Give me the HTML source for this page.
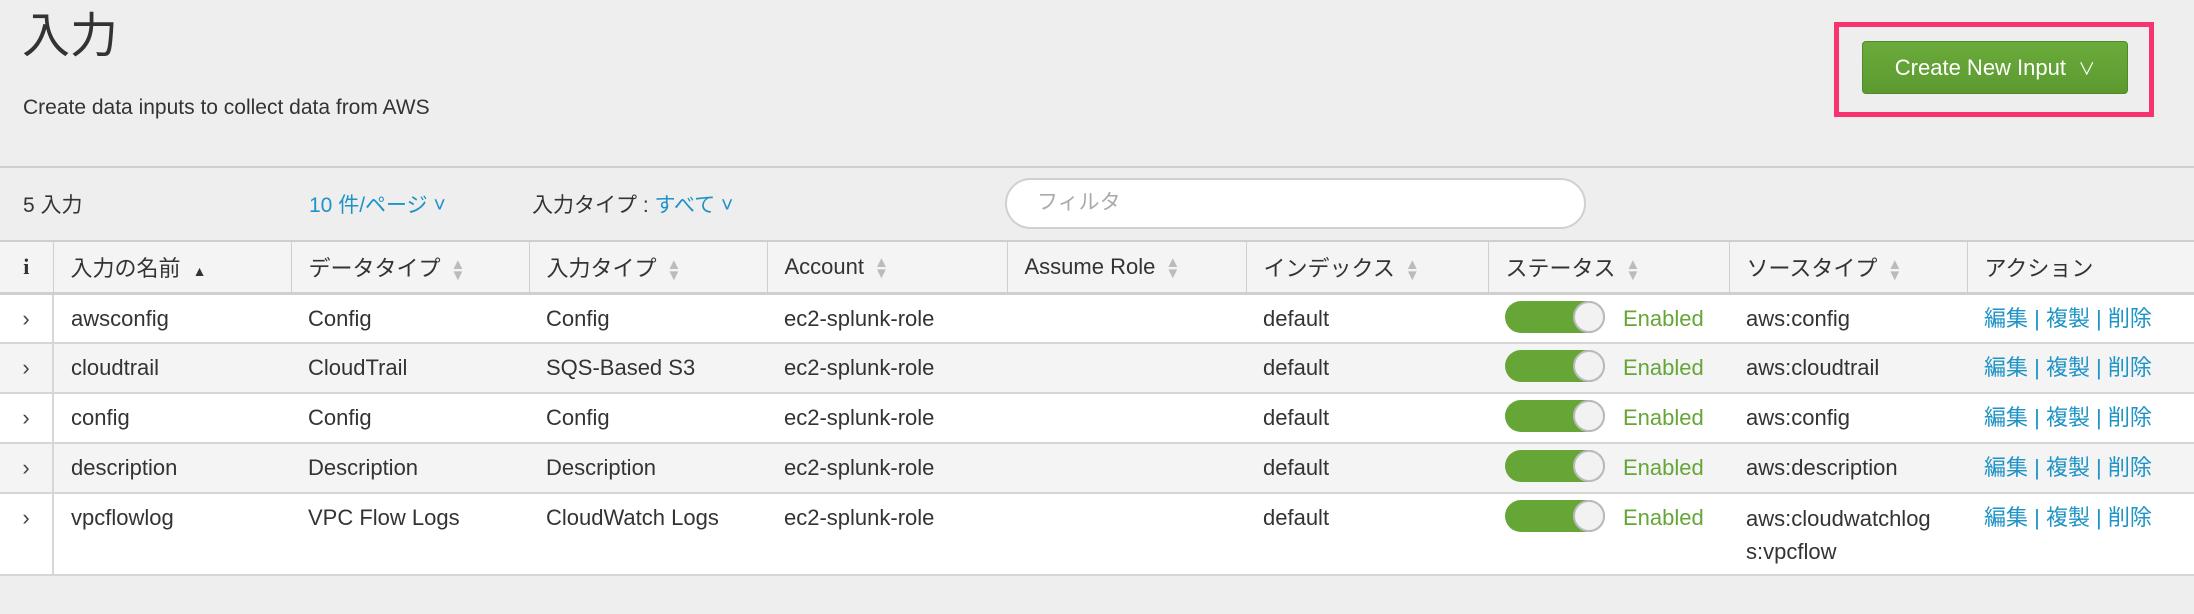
<!DOCTYPE html>
<html><head><meta charset="utf-8"><style>
*{box-sizing:border-box;margin:0;padding:0}
body{width:2194px;height:614px;background:#eeeeee;font-family:"Liberation Sans","Noto Sans CJK JP",sans-serif;color:#333;position:relative;overflow:hidden}
.abs{position:absolute;white-space:nowrap}
h1{position:absolute;left:22px;top:-4px;font-size:48px;font-weight:normal;color:#333}
.sub{left:23px;top:96px;font-size:21px}
.hr{position:absolute;left:0;width:2194px;height:2px;background:#cfcfcf}
.pink{position:absolute;left:1834px;top:22px;width:320px;height:95px;border:5px solid #f7346f}
.btn{position:absolute;left:1862px;top:41px;width:266px;height:53px;background:linear-gradient(#6aab3b,#5c9a30);border:1px solid #4e8a28;border-radius:4px;color:#fff;font-size:22px;line-height:51px;text-align:center}
.blue{color:#1e93c6}
.filter{position:absolute;left:1005px;top:178px;width:581px;height:51px;background:#fff;border:2px solid #d0d0d0;border-radius:26px;font-size:21px;color:#aaa;padding-left:30px;line-height:46px}
table{position:absolute;left:0;top:240px;width:2194px;border-collapse:collapse;font-size:22px}
th{height:52px;background:#f4f4f4;font-weight:normal;text-align:left;padding-left:17px;border-left:1px solid #cfcfcf;border-bottom:3px solid #cfcfcf;border-top:2px solid #cfcfcf}
th:first-child{border-left:none;padding-left:0;text-align:center}
td{height:50px;padding-left:17px;border-bottom:2px solid #d6d6d6;vertical-align:top;padding-top:11px;line-height:26px}
td:first-child{border-right:2px solid #d6d6d6;padding-left:0;text-align:center;color:#444}
tr.g td{background:#f4f4f4}
tr.w td{background:#fff}
.s{color:#bbb;font-size:15px;margin-left:10px;display:inline-block;vertical-align:middle;line-height:11px}
.tg{display:inline-block;width:100px;height:32px;background:#65a637;border-radius:16px;position:relative;vertical-align:middle;margin-top:-6px}
.tg:after{content:"";position:absolute;right:0;top:0;width:32px;height:32px;border-radius:50%;background:#f2f2f2;border:2px solid #bbb;box-sizing:border-box}
.en{color:#65a637;margin-left:18px}
</style></head><body>
<h1>入力</h1>
<div class="abs sub">Create data inputs to collect data from AWS</div>
<div class="pink"></div>
<div class="btn">Create New Input &nbsp;<span style="font-size:17px">∨</span></div>
<div class="hr" style="top:166px"></div>
<div class="abs" style="left:23px;top:189px;font-size:21px">5 入力</div>
<div class="abs blue" style="left:309px;top:189px;font-size:21px">10 件/ページ ˅</div>
<div class="abs" style="left:532px;top:189px;font-size:21px">入力タイプ : <span class="blue">すべて ˅</span></div>
<div class="filter">フィルタ</div>
<table>
<colgroup><col style="width:53px"><col style="width:238px"><col style="width:238px"><col style="width:238px"><col style="width:240px"><col style="width:239px"><col style="width:242px"><col style="width:241px"><col style="width:238px"><col style="width:227px"></colgroup>
<tr><th style="font-family:'Liberation Serif',serif;font-weight:bold">i</th><th>入力の名前 <span style="font-size:14px;margin-left:6px">▲</span></th><th>データタイプ<span class="s">▲<br>▼</span></th><th>入力タイプ<span class="s">▲<br>▼</span></th><th>Account<span class="s">▲<br>▼</span></th><th>Assume Role<span class="s">▲<br>▼</span></th><th>インデックス<span class="s">▲<br>▼</span></th><th>ステータス<span class="s">▲<br>▼</span></th><th>ソースタイプ<span class="s">▲<br>▼</span></th><th>アクション</th></tr>
<tr class="w"><td>›</td><td>awsconfig</td><td>Config</td><td>Config</td><td>ec2-splunk-role</td><td></td><td>default</td><td><span class="tg"></span><span class="en">Enabled</span></td><td>aws:config</td><td class="blue">編集 | 複製 | 削除</td></tr>
<tr class="g"><td>›</td><td>cloudtrail</td><td>CloudTrail</td><td>SQS-Based S3</td><td>ec2-splunk-role</td><td></td><td>default</td><td><span class="tg"></span><span class="en">Enabled</span></td><td>aws:cloudtrail</td><td class="blue">編集 | 複製 | 削除</td></tr>
<tr class="w"><td>›</td><td>config</td><td>Config</td><td>Config</td><td>ec2-splunk-role</td><td></td><td>default</td><td><span class="tg"></span><span class="en">Enabled</span></td><td>aws:config</td><td class="blue">編集 | 複製 | 削除</td></tr>
<tr class="g"><td>›</td><td>description</td><td>Description</td><td>Description</td><td>ec2-splunk-role</td><td></td><td>default</td><td><span class="tg"></span><span class="en">Enabled</span></td><td>aws:description</td><td class="blue">編集 | 複製 | 削除</td></tr>
<tr class="w"><td style="height:82px">›</td><td>vpcflowlog</td><td>VPC Flow Logs</td><td>CloudWatch Logs</td><td>ec2-splunk-role</td><td></td><td>default</td><td><span class="tg"></span><span class="en">Enabled</span></td><td style="line-height:33px;padding-top:8px">aws:cloudwatchlog<br>s:vpcflow</td><td class="blue">編集 | 複製 | 削除</td></tr>
</table>
</body></html>
